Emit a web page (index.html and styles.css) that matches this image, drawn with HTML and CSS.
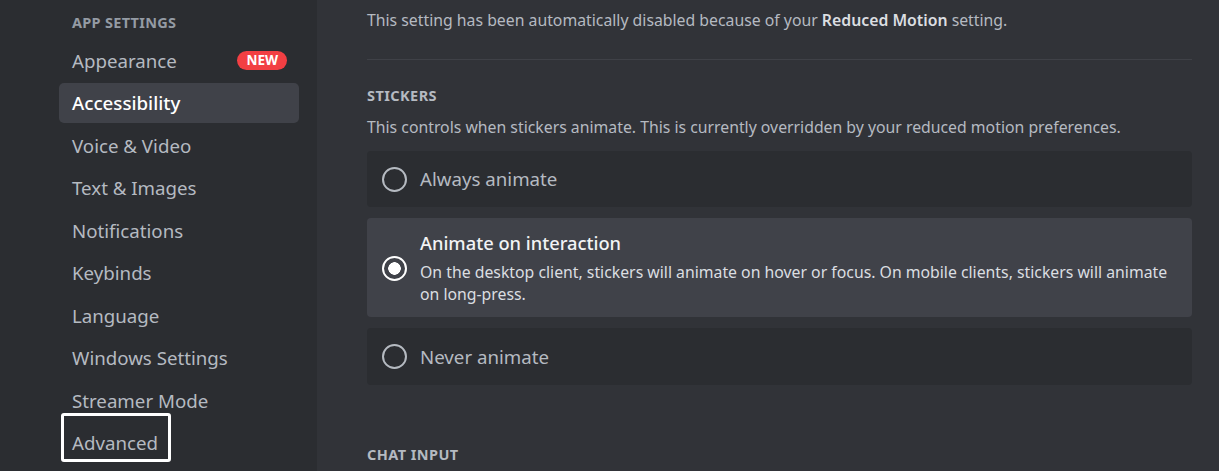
FILE: index.html
```html
<!DOCTYPE html>
<html lang="en">
<head>
  <meta charset="UTF-8">
  <title>Accessibility Settings</title>
  <link rel="stylesheet" href="styles.css">
</head>
<body>
  <div class="layout">
    <nav class="sidebar">
      <div class="side-header">App Settings</div>
      <div class="side-item">Appearance <span class="badge">NEW</span></div>
      <div class="side-item selected">Accessibility</div>
      <div class="side-item">Voice &amp; Video</div>
      <div class="side-item">Text &amp; Images</div>
      <div class="side-item">Notifications</div>
      <div class="side-item">Keybinds</div>
      <div class="side-item">Language</div>
      <div class="side-item">Windows Settings</div>
      <div class="side-item">Streamer Mode</div>
      <div class="side-item marked">Advanced<span class="highlight"></span></div>
    </nav>

    <main class="content">
      <p class="note">This setting has been automatically disabled because of your <strong>Reduced Motion</strong> setting.</p>
      <div class="divider"></div>

      <h5 class="section-title">Stickers</h5>
      <p class="note desc">This controls when stickers animate. This is currently overridden by your reduced motion preferences.</p>

      <div class="radio-group">
        <div class="radio-card">
          <span class="radio"></span>
          <div class="radio-text"><div class="radio-label">Always animate</div></div>
        </div>
        <div class="radio-card checked">
          <span class="radio"></span>
          <div class="radio-text">
            <div class="radio-label">Animate on interaction</div>
            <div class="radio-desc">On the desktop client, stickers will animate on hover or focus. On mobile clients, stickers will animate on long-press.</div>
          </div>
        </div>
        <div class="radio-card last">
          <span class="radio"></span>
          <div class="radio-text"><div class="radio-label">Never animate</div></div>
        </div>
      </div>

      <h5 class="section-title chat">Chat Input</h5>
    </main>
  </div>
</body>
</html>
```

FILE: styles.css
```css
*, *::before, *::after {
  box-sizing: border-box;
}
html, body {
  margin: 0;
  padding: 0;
  height: 100%;
  overflow: hidden;
}
body {
  font-family: "Noto Sans", "Open Sans", sans-serif;
  background: #313338;
  color: #b5bac1;
}
.layout {
  display: flex;
  height: 471px;
}

/* Sidebar */
.sidebar {
  width: 317px;
  flex: none;
  background: #2b2d31;
  padding: 12px 18px 0 59px;
}
.side-header {
  font-size: 14.5px;
  line-height: 20px;
  font-weight: 700;
  text-transform: uppercase;
  letter-spacing: 0.02em;
  color: #949ba4;
  padding: 0 13px;
  margin-bottom: 8px;
}
.side-item {
  position: relative;
  display: flex;
  align-items: center;
  justify-content: space-between;
  height: 40px;
  margin-bottom: 2.5px;
  padding: 0 12px 0 13px;
  border-radius: 5px;
  font-size: 18.7px;
  color: #b5bac1;
}
.side-item.selected {
  background: #404249;
  color: #fff;
  font-weight: 500;
}
.badge {
  background: #f23f43;
  color: #fff;
  font-size: 13.5px;
  font-weight: 700;
  line-height: 19px;
  padding: 0 9px;
  border-radius: 10px;
}
.highlight {
  position: absolute;
  left: 2px;
  top: -10px;
  width: 110px;
  height: 49px;
  border: 3px solid #fff;
  border-radius: 3px;
}

/* Main content */
.content {
  flex: 1;
  padding: 8px 27px 0 50px;
}
.note {
  margin: 0;
  font-size: 15.8px;
  line-height: 24px;
  color: #b5bac1;
}
.note strong {
  color: #dbdee1;
  font-weight: 600;
}
.divider {
  height: 1px;
  background: #3f4147;
  margin-top: 27px;
}
.section-title {
  margin: 25px 0 0;
  font-size: 14.5px;
  line-height: 20px;
  font-weight: 700;
  letter-spacing: 0.03em;
  text-transform: uppercase;
  color: #b5bac1;
}
.desc {
  margin-top: 10px;
}
.radio-group {
  margin-top: 12px;
  display: flex;
  flex-direction: column;
  gap: 11px;
}
.radio-card {
  display: flex;
  align-items: center;
  gap: 13px;
  min-height: 56px;
  padding: 12px 15px;
  background: #2b2d31;
  border-radius: 4px;
}
.radio-card.last {
  min-height: 57px;
}
.radio-card.checked {
  background: #404249;
  padding-top: 13px;
}
.radio {
  flex: none;
  width: 25px;
  height: 25px;
  border-radius: 50%;
  border: 2.5px solid #b5bac1;
}
.radio-card.checked .radio {
  border-color: #fff;
  background: radial-gradient(circle, #fff 0 6px, transparent 6.5px);
}
.radio-label {
  font-size: 18.7px;
  line-height: 24px;
  color: #b5bac1;
}
.radio-card.checked .radio-label {
  color: #f2f3f5;
  font-weight: 500;
  font-size: 18.3px;
}
.radio-desc {
  margin-top: 6px;
  font-size: 15.8px;
  line-height: 22px;
  color: #dbdee1;
}
.section-title.chat {
  margin-top: 59px;
}
```
